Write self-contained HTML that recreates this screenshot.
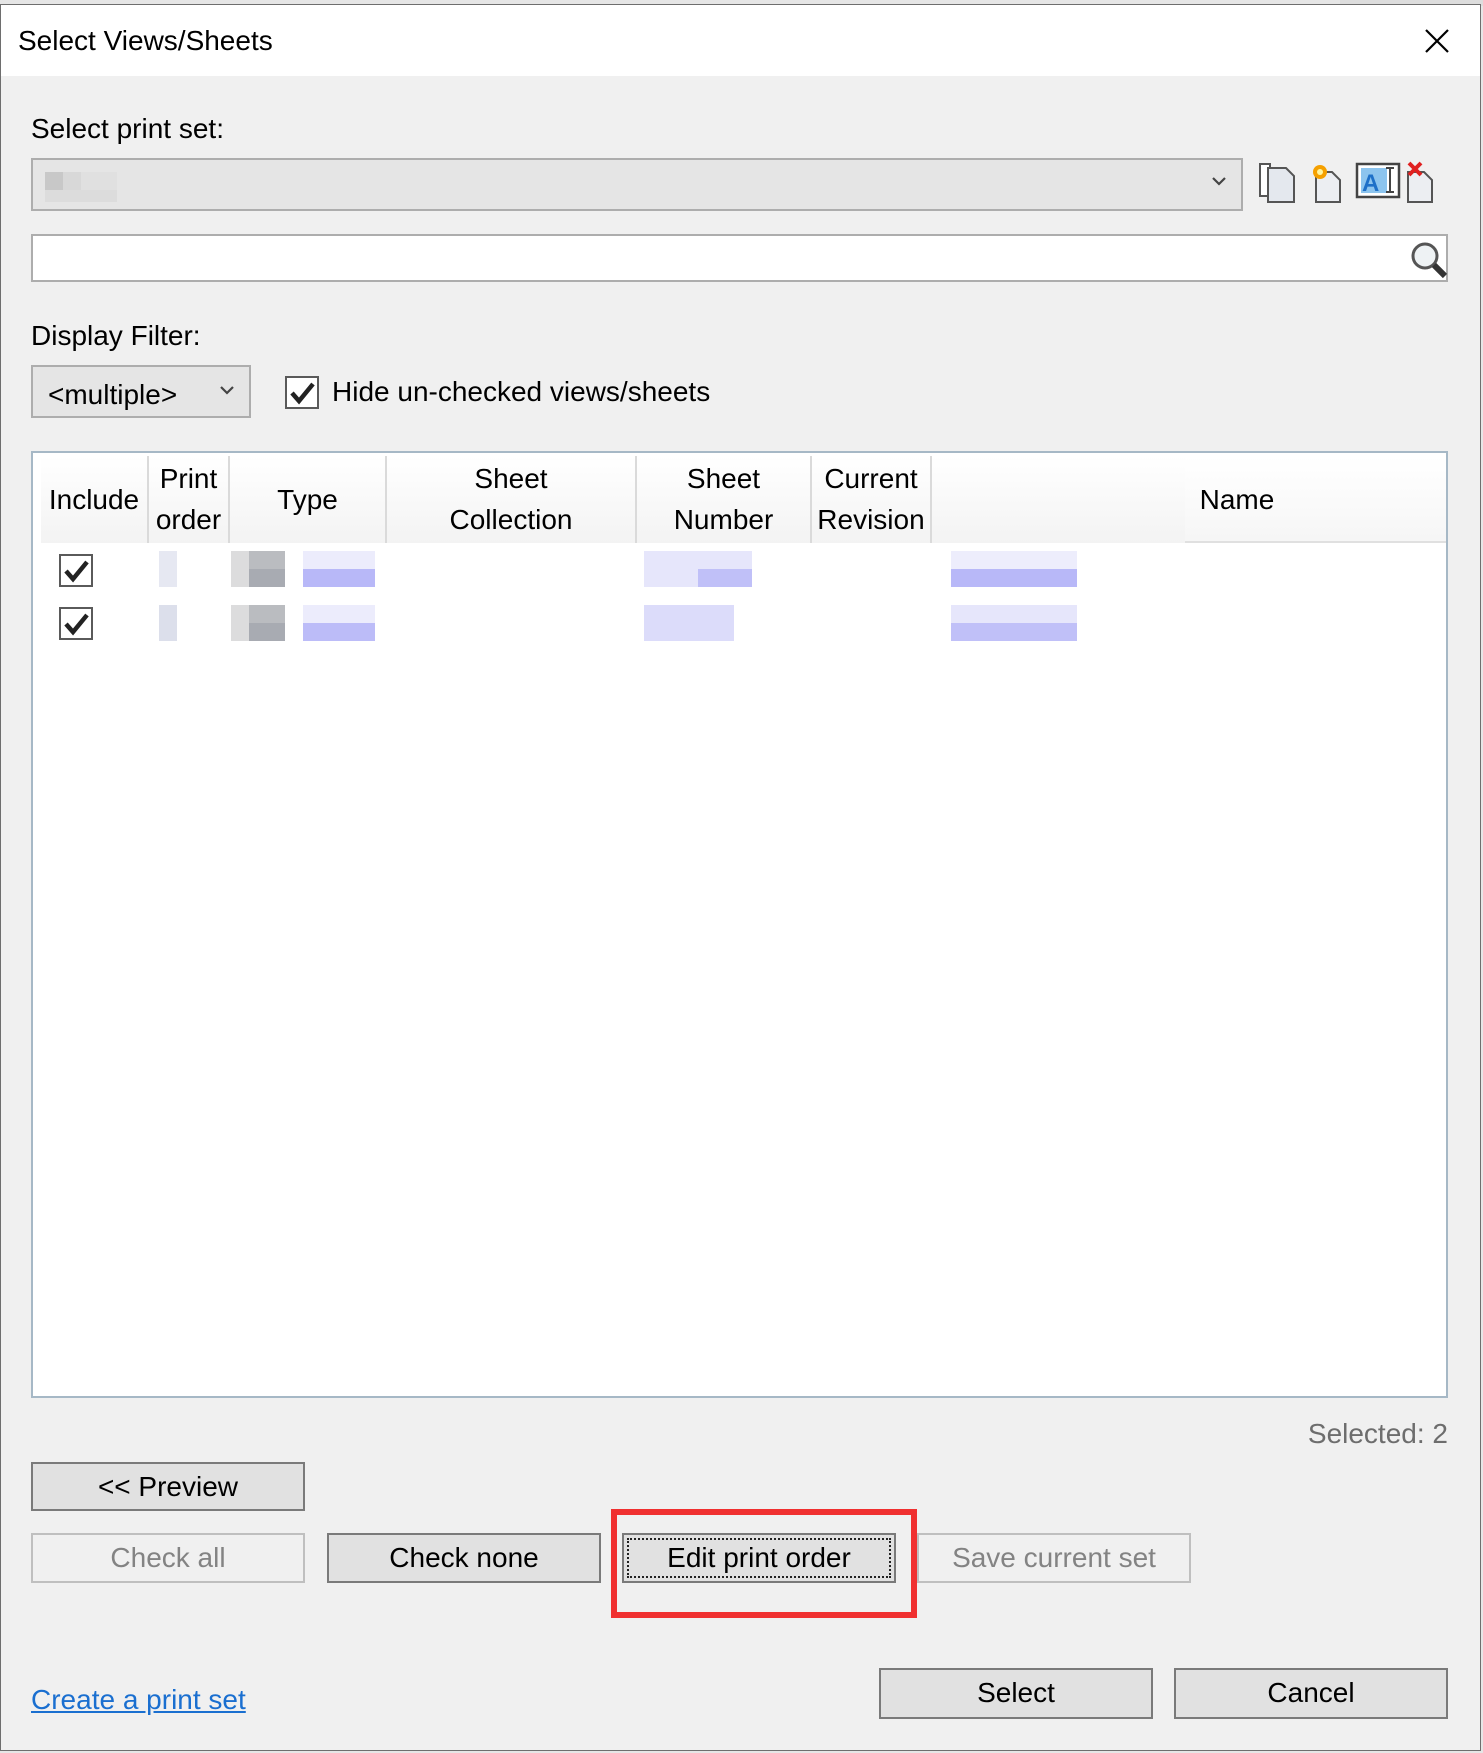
<!DOCTYPE html>
<html><head><style>
*{box-sizing:border-box;margin:0;padding:0}
body{width:1483px;height:1753px;background:#e6e6e6;position:relative;overflow:hidden;font-family:"Segoe UI","Liberation Sans",sans-serif;color:#000}
.a{position:absolute}
.dlg{left:0;top:4px;width:1481px;height:1747px;background:#f0f0f0;border:1px solid #6e6e6e}
.t{font-size:28px;white-space:nowrap;line-height:1}
.btn{position:absolute;background:#e1e1e1;border:2px solid #7a7a7a;font-size:28px;text-align:center;line-height:45px}
.dis{background:#f0f0f0;border-color:#bfbfbf;color:#838383}
.hd{position:absolute;top:456px;height:87px;font-size:28px;text-align:center;line-height:41px;padding-top:2px;border-right:2px solid #dadada}
.px{position:absolute;width:18px;height:18px}
.cb{position:absolute;width:34px;height:33px;border:2px solid #5a5a5a;background:#fff}
</style></head><body>
<div class="a" style="left:1340px;top:0;width:143px;height:6px;background:#ddd"></div>
<div class="a dlg"></div>
<div class="a" style="left:1px;top:5px;width:1479px;height:71px;background:#fff"></div>
<div class="a t" style="left:18px;top:27px">Select Views/Sheets</div>
<svg class="a" style="left:1424px;top:28px" width="26" height="26"><path d="M2 2L24 24M24 2L2 24" stroke="#000" stroke-width="2.2"/></svg>
<div class="a t" style="left:31px;top:115px">Select print set:</div>
<div class="a" style="left:31px;top:158px;width:1212px;height:53px;background:#e5e5e5;border:2px solid #adadad"></div>
<div class="a" style="left:45px;top:172px;width:18px;height:18px;background:#c8c8c8"></div>
<div class="a" style="left:63px;top:172px;width:18px;height:18px;background:#d8d8d8"></div>
<div class="a" style="left:81px;top:172px;width:36px;height:18px;background:#e0e0e0"></div>
<div class="a" style="left:45px;top:190px;width:72px;height:12px;background:#dcdcdc"></div>
<svg class="a" style="left:1211px;top:176px" width="16" height="10"><path d="M2 2L8 8L14 2" stroke="#444" stroke-width="2.2" fill="none"/></svg>
<svg class="a" style="left:1258px;top:160px" width="192" height="44">
<path d="M2 4H12V36H2Z" fill="#fff" stroke="#555" stroke-width="2"/>
<path d="M10 8H28L36 16V42H10Z" fill="#e4e8ee" stroke="#555" stroke-width="2"/>
<path d="M64 12H74L82 20V42H58V12Z" fill="#eceef2" stroke="#555" stroke-width="2"/>
<circle cx="62" cy="12" r="7" fill="#f5a000"/><circle cx="62" cy="12" r="3" fill="#fff5a0"/>
<rect x="99" y="4" width="42" height="33" fill="#fff" stroke="#444" stroke-width="2.5"/>
<rect x="103" y="8" width="26" height="25" fill="#8cc4ee"/>
<text x="104" y="31" font-size="24" font-weight="bold" fill="#1e70c8" font-family="Liberation Sans">A</text>
<path d="M128 8H136M132 8V32M128 32H136" stroke="#444" stroke-width="2"/>
<path d="M156 12H166L174 20V42H150V12Z" fill="#eceef2" stroke="#555" stroke-width="2"/>
<path d="M151 3L163 15M163 3L151 15" stroke="#e02020" stroke-width="4"/>
</svg>
<div class="a" style="left:31px;top:234px;width:1417px;height:48px;background:#fff;border:2px solid #adadad"></div>
<svg class="a" style="left:1409px;top:240px" width="40" height="40"><circle cx="16" cy="16" r="12" fill="#eef2f4" stroke="#555" stroke-width="3"/><path d="M25 25L36 36" stroke="#333" stroke-width="6"/></svg>
<div class="a t" style="left:31px;top:322px">Display Filter:</div>
<div class="a" style="left:31px;top:365px;width:220px;height:53px;background:#e5e5e5;border:2px solid #adadad"></div>
<div class="a t" style="left:48px;top:381px">&lt;multiple&gt;</div>
<svg class="a" style="left:219px;top:385px" width="16" height="10"><path d="M2 2L8 8L14 2" stroke="#444" stroke-width="2.2" fill="none"/></svg>
<div class="cb" style="left:285px;top:376px"></div>
<svg class="a" style="left:289px;top:381px" width="28" height="24"><path d="M3 12L10 20L24 3" stroke="#222" stroke-width="4.5" fill="none"/></svg>
<div class="a t" style="left:332px;top:378px">Hide un-checked views/sheets</div>
<div class="a" style="left:31px;top:451px;width:1417px;height:947px;background:#fff;border:2px solid #a6b8c6"></div>
<div class="a" style="left:41px;top:456px;width:1144px;height:87px;background:linear-gradient(#fff,#f3f3f3)"></div>
<div class="a" style="left:1185px;top:456px;width:261px;height:87px;background:linear-gradient(#fff,#f6f6f6);border-bottom:2px solid #e0e0e0"></div>
<div class="hd" style="left:41px;width:108px;line-height:87px;padding:0">Include</div>
<div class="hd" style="left:149px;width:81px">Print<br>order</div>
<div class="hd" style="left:230px;width:157px;line-height:87px;padding:0">Type</div>
<div class="hd" style="left:387px;width:250px">Sheet<br>Collection</div>
<div class="hd" style="left:637px;width:175px">Sheet<br>Number</div>
<div class="hd" style="left:812px;width:120px">Current<br>Revision</div>
<div class="hd" style="left:932px;width:610px;line-height:87px;padding:0;border:0">Name</div>
<div class="cb" style="left:59px;top:554px"></div>
<svg class="a" style="left:63px;top:559px" width="28" height="24"><path d="M3 12L10 20L24 3" stroke="#222" stroke-width="4.5" fill="none"/></svg>
<div class="cb" style="left:59px;top:607px"></div>
<svg class="a" style="left:63px;top:612px" width="28" height="24"><path d="M3 12L10 20L24 3" stroke="#222" stroke-width="4.5" fill="none"/></svg>
<div class="px" style="left:159px;top:551px;height:36px;background:#e6e8f2"></div>
<div class="px" style="left:231px;top:551px;height:36px;background:#dcdcdd"></div>
<div class="px" style="left:249px;top:551px;width:36px;height:18px;background:#babcc0"></div>
<div class="px" style="left:249px;top:569px;width:36px;height:18px;background:#a8abb2"></div>
<div class="px" style="left:303px;top:551px;width:72px;height:18px;background:#ececfc"></div>
<div class="px" style="left:303px;top:569px;width:72px;height:18px;background:#b8b8f8"></div>
<div class="px" style="left:644px;top:551px;width:108px;height:36px;background:#e6e6fb"></div>
<div class="px" style="left:698px;top:569px;width:54px;height:18px;background:#c0c0f8"></div>
<div class="px" style="left:951px;top:551px;width:126px;height:18px;background:#ededfc"></div>
<div class="px" style="left:951px;top:569px;width:126px;height:18px;background:#b8b8f8"></div>
<div class="px" style="left:159px;top:605px;height:36px;background:#dcdfeb"></div>
<div class="px" style="left:231px;top:605px;height:36px;background:#dcdcdd"></div>
<div class="px" style="left:249px;top:605px;width:36px;height:18px;background:#babcc0"></div>
<div class="px" style="left:249px;top:623px;width:36px;height:18px;background:#a8abb2"></div>
<div class="px" style="left:303px;top:605px;width:72px;height:18px;background:#ececfc"></div>
<div class="px" style="left:303px;top:623px;width:72px;height:18px;background:#bcbcf8"></div>
<div class="px" style="left:644px;top:605px;width:90px;height:36px;background:#dcdcfa"></div>
<div class="px" style="left:951px;top:605px;width:126px;height:18px;background:#e6e6fb"></div>
<div class="px" style="left:951px;top:623px;width:126px;height:18px;background:#c0c0f8"></div>
<div class="a t" style="right:35px;top:1420px;color:#6d6d6d">Selected: 2</div>
<div class="btn" style="left:31px;top:1462px;width:274px;height:49px">&lt;&lt; Preview</div>
<div class="btn dis" style="left:31px;top:1533px;width:274px;height:50px">Check all</div>
<div class="btn" style="left:327px;top:1533px;width:274px;height:50px">Check none</div>
<div class="btn" style="left:622px;top:1533px;width:274px;height:50px"><div style="position:absolute;left:3px;top:3px;right:3px;bottom:3px;border:2px dotted #222"></div>Edit print order</div>
<div class="btn dis" style="left:917px;top:1533px;width:274px;height:50px">Save current set</div>
<div class="a" style="left:611px;top:1509px;width:306px;height:109px;border:6px solid #f03030"></div>
<div class="btn" style="left:879px;top:1668px;width:274px;height:51px">Select</div>
<div class="btn" style="left:1174px;top:1668px;width:274px;height:51px">Cancel</div>
<div class="a t" style="left:31px;top:1686px;color:#1a6fd0;text-decoration:underline">Create a print set</div>
</body></html>
